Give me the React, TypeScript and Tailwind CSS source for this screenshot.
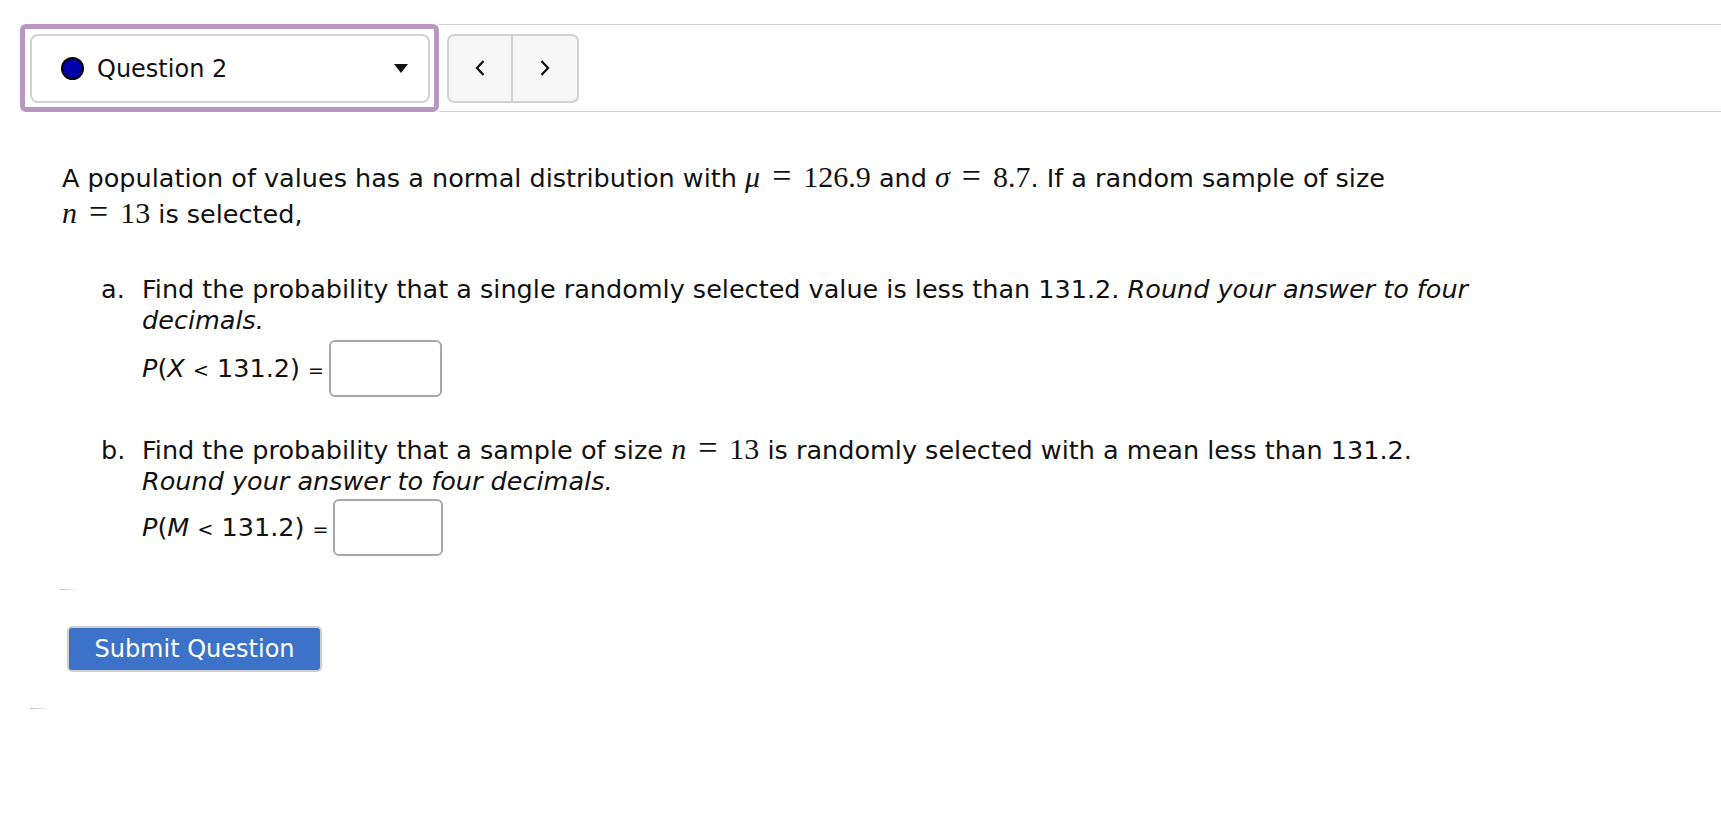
import React from "react";

const SANS = "font-['DejaVu_Sans',sans-serif]";

function M({ children }: { children: React.ReactNode }) {
  return (
    <span className="font-['Liberation_Serif','DejaVu_Serif',serif] text-[30px] leading-[0]">
      {children}
    </span>
  );
}
function V({ children }: { children: React.ReactNode }) {
  return <span className="italic">{children}</span>;
}
function Eq() {
  return <span className="mx-[12px] text-[34px] leading-[0]">=</span>;
}
function S({ children }: { children: React.ReactNode }) {
  return <span className="text-[19px] leading-[0]">{children}</span>;
}

export default function App() {
  return (
    <div className={`${SANS} min-h-[814px] w-[1721px] bg-white text-[25.5px] text-[#111]`}>
      {/* header */}
      <div className="flex pl-[20px] pt-[24px]">
        <div className="h-[88px] w-[419px] rounded-[6px] border-[5px] border-[#b896c2] pb-[4px] pl-[5px] pr-[4px] pt-[5px]">
          <div className="flex h-full w-full items-center rounded-[8px] border-2 border-[#d2d2d2] bg-white pl-[29px] pr-[20px]">
            <span className="h-[23px] w-[23px] rounded-full border-[2px] border-black bg-[#0000a8]" />
            <span className="ml-[13px] flex-1 text-[24px]">Question 2</span>
            <svg width="14" height="9" viewBox="0 0 14 9">
              <path d="M0 0 L14 0 L7 9 Z" fill="#111" />
            </svg>
          </div>
        </div>
        <div className="flex h-[88px] flex-1 items-center border-y border-[#cfcfcf] pl-[8px]">
          <div className="flex h-[69px] overflow-hidden rounded-[7px] border-2 border-[#d2d2d2] bg-[#f6f6f6]">
            <button className="flex w-[64px] items-center justify-center border-r-2 border-[#d2d2d2]">
              <svg width="12" height="20" viewBox="0 0 12 20">
                <path d="M9.5 3 L3 10 L9.5 17" fill="none" stroke="#111" strokeWidth="2.2" />
              </svg>
            </button>
            <button className="flex w-[64px] items-center justify-center">
              <svg width="12" height="20" viewBox="0 0 12 20">
                <path d="M2.5 3 L9 10 L2.5 17" fill="none" stroke="#111" strokeWidth="2.2" />
              </svg>
            </button>
          </div>
        </div>
      </div>

      {/* body */}
      <div className="pl-[62px] pt-[48px]">
        <p className="leading-[36px]">
          A population of values has a normal distribution with{" "}
          <M>
            <V>μ</V>
            <Eq />
            126.9
          </M>{" "}
          and{" "}
          <M>
            <V>σ</V>
            <Eq />
            8.7
          </M>
          . If a random sample of size
          <br />
          <M>
            <V>n</V>
            <Eq />
            13
          </M>{" "}
          is selected,
        </p>

        <div className="mt-[42px] flex pl-[39px]">
          <span className="w-[41px] leading-[31px]">a.</span>
          <div>
            <p className="leading-[31px]">
              Find the probability that a single randomly selected value is less than 131.2.{" "}
              <i>Round your answer to four</i>
              <br />
              <i>decimals.</i>
            </p>
            <div className="mt-[4px] flex items-center">
              <span>
                <i>P</i>(<i>X</i> <S>&lt;</S> 131.2) <S>=</S>
              </span>
              <input className="ml-[5px] h-[57px] w-[113px] rounded-[6px] border-2 border-[#a8a8a8] bg-white" />
            </div>
          </div>
        </div>

        <div className="mt-[38px] flex pl-[39px]">
          <span className="w-[41px] leading-[31px]">b.</span>
          <div>
            <p className="leading-[31px]">
              Find the probability that a sample of size{" "}
              <M>
                <V>n</V>
                <Eq />
                13
              </M>{" "}
              is randomly selected with a mean less than 131.2.
              <br />
              <i>Round your answer to four decimals.</i>
            </p>
            <div className="mt-[2px] flex items-center">
              <span>
                <i>P</i>(<i>M</i> <S>&lt;</S> 131.2) <S>=</S>
              </span>
              <input className="ml-[5px] h-[57px] w-[110px] rounded-[6px] border-2 border-[#a8a8a8] bg-white" />
            </div>
          </div>
        </div>
      </div>

      <div className="ml-[60px] mt-[33px] h-px w-[17px] bg-gradient-to-r from-[#bbbbbb] to-white" />

      <button className="ml-[67px] mt-[36px] flex h-[46px] w-[255px] items-center justify-center rounded-[5px] border-2 border-[#cfcfcf] bg-[#3c73c9] text-[24px] text-white">
        Submit Question
      </button>

      <div className="ml-[30px] mt-[36px] h-px w-[17px] bg-gradient-to-r from-[#bbbbbb] to-white" />
    </div>
  );
}
